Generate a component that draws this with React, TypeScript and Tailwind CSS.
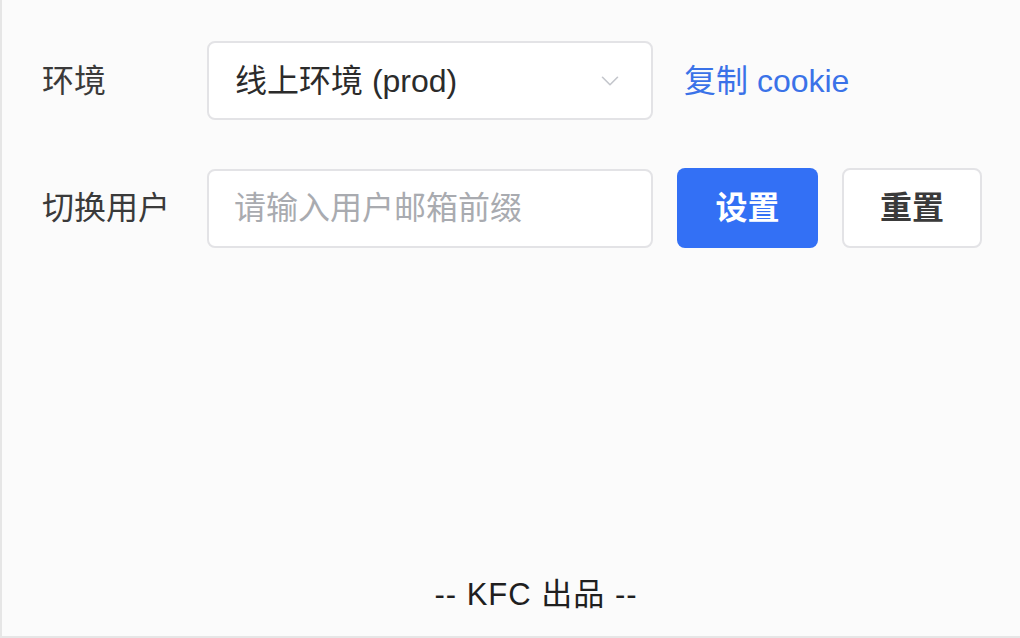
import { ChevronDown } from "lucide-react";

const font = "font-['Liberation_Sans','Noto_Sans_CJK_SC',sans-serif]";

export default function App() {
  return (
    <div
      className={`${font} flex h-[638px] w-[1020px] flex-col border-b-2 border-l-2 border-[#e6e6e6] bg-[#fbfbfb] text-[#333]`}
    >
      <div className="flex flex-col gap-[48px] pl-[40px] pt-[41px]">
        <div className="flex items-center">
          <span className="w-[165px] text-[32px] leading-none text-[#3a3a3a]">环境</span>
          <div className="flex h-[79px] w-[446px] items-center justify-between rounded-[8px] border-2 border-[#e3e3e6] bg-white pl-[26px] pr-[26px]">
            <span className="text-[32px] leading-none text-[#2b2b2b]">线上环境 (prod)</span>
            <ChevronDown className="h-[30px] w-[30px] text-[#c4c6cc]" strokeWidth={1.3} />
          </div>
          <a className="ml-[31px] text-[32px] leading-none text-[#3a72e8]">复制 cookie</a>
        </div>
        <div className="flex items-center">
          <span className="w-[165px] text-[32px] leading-none text-[#3a3a3a]">切换用户</span>
          <div className="flex h-[79px] w-[446px] items-center rounded-[8px] border-2 border-[#e3e3e6] bg-white pl-[25px]">
            <span className="text-[32px] leading-none text-[#a9abb0]">请输入用户邮箱前缀</span>
          </div>
          <button
            type="button"
            className="ml-[24px] flex h-[80px] w-[141px] items-center justify-center rounded-[8px] bg-[#3370f5] text-[32px] font-bold leading-none text-white"
          >
            设置
          </button>
          <button
            type="button"
            className="ml-[24px] flex h-[80px] w-[140px] items-center justify-center rounded-[8px] border-2 border-[#e3e3e6] bg-white text-[32px] font-semibold leading-none text-[#3a3a3a]"
          >
            重置
          </button>
        </div>
      </div>
      <div className="mt-auto flex justify-center pb-[26px] pl-[50px]">
        <span className="text-[31px] leading-none tracking-[1px] text-[#1f1f1f]">-- KFC 出品 --</span>
      </div>
    </div>
  );
}
